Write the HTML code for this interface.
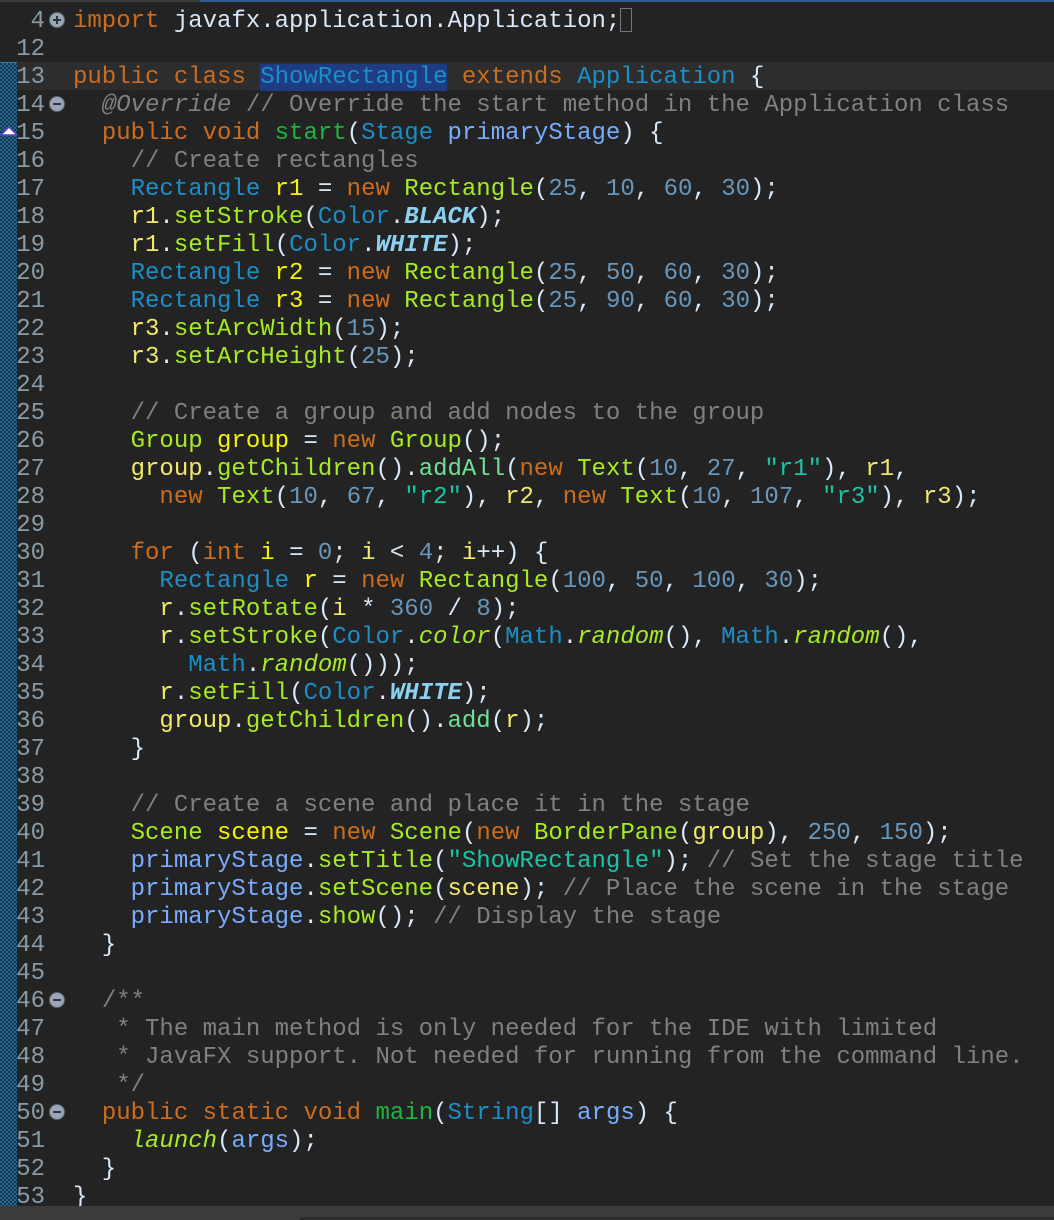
<!DOCTYPE html>
<html><head><meta charset="utf-8"><style>
html,body{margin:0;padding:0;background:#232323;width:1054px;height:1220px;overflow:hidden;position:relative}
.top{position:absolute;left:0;top:0;width:1054px;height:2px;background:#3a3a3c}
.top2{position:absolute;left:200px;top:0;width:854px;height:2px;background:#2f5c8e}
.gut{position:absolute;left:0;top:62px;width:17px;height:1144px;background-color:#14384f;background-image:conic-gradient(#2a6a92 25%,#14384f 0 50%,#2a6a92 0 75%,#14384f 0);background-size:4px 4px;border-top:1px solid #3a7aa8}
.hl{position:absolute;left:17px;top:62px;width:1037px;height:28px;background:#2d2d2d}
pre{margin:0;position:absolute;font-family:"Liberation Mono",monospace;font-size:24px;line-height:28px;white-space:pre}
.ln{left:0;top:8px;width:45px;text-align:right;color:#8a9ba8}
.code{left:73px;top:8px;color:#d9e8f7}
.k{color:#cc6c1d}.t{color:#1a8fc8}.m{color:#a7ec21}.lm{color:#6fe095}.n{color:#6897bb}.s{color:#17c6a3}.c{color:#808080}.p{color:#79abff}.v{color:#f2e96b}.vd{color:#f7f300}.sc{color:#8dd1f2;font-weight:bold;font-style:italic}.it{font-style:italic}.md{color:#1eb540}
.sel{background:#1f3b82}
.fold{position:absolute;left:49px;width:14px;height:14px;border-radius:50%;background:#9aa6b4;border:1px solid #5d6875}
.fold:after{content:"";position:absolute;left:3px;top:6px;width:8px;height:2px;background:#2b3440}
.plus:before{content:"";position:absolute;left:6px;top:3px;width:2px;height:8px;background:#2b3440}
.bot{position:absolute;left:0;top:1206px;width:1054px;height:14px;background:#3b3b3d}
.bot2{position:absolute;left:300px;top:1217px;width:754px;height:3px;background:#2a2a2a}
.box{display:inline-block;width:12px;height:24px;border:1px solid #777;vertical-align:-5px;box-sizing:border-box}
</style></head><body>
<div class="top"></div><div class="top2"></div>
<div class="hl"></div>
<div class="gut"></div>
<svg style="position:absolute;left:0;top:124px" width="18" height="14"><polygon points="1,11 9,3 17,11" fill="#fff" stroke="#5b3fc0" stroke-width="1.5"/></svg>
<div class="fold plus" style="top:12px"></div>
<div class="fold" style="top:96px"></div>
<div class="fold" style="top:992px"></div>
<div class="fold" style="top:1104px"></div>
<pre class="ln">4
12
13
14
15
16
17
18
19
20
21
22
23
24
25
26
27
28
29
30
31
32
33
34
35
36
37
38
39
40
41
42
43
44
45
46
47
48
49
50
51
52
53</pre>
<pre class="code"><span class="k">import</span> javafx.application.Application;<span class="box"></span>

<span class="k">public</span> <span class="k">class</span> <span class="t sel">ShowRectangle</span> <span class="k">extends</span> <span class="t">Application</span> {
  <span class="c it">@Override</span> <span class="c">// Override the start method in the Application class</span>
  <span class="k">public</span> <span class="k">void</span> <span class="md">start</span>(<span class="t">Stage</span> <span class="p">primaryStage</span>) {
    <span class="c">// Create rectangles</span>
    <span class="t">Rectangle</span> <span class="vd">r1</span> = <span class="k">new</span> <span class="m">Rectangle</span>(<span class="n">25</span>, <span class="n">10</span>, <span class="n">60</span>, <span class="n">30</span>);
    <span class="v">r1</span>.<span class="m">setStroke</span>(<span class="t">Color</span>.<span class="sc">BLACK</span>);
    <span class="v">r1</span>.<span class="m">setFill</span>(<span class="t">Color</span>.<span class="sc">WHITE</span>);
    <span class="t">Rectangle</span> <span class="vd">r2</span> = <span class="k">new</span> <span class="m">Rectangle</span>(<span class="n">25</span>, <span class="n">50</span>, <span class="n">60</span>, <span class="n">30</span>);
    <span class="t">Rectangle</span> <span class="vd">r3</span> = <span class="k">new</span> <span class="m">Rectangle</span>(<span class="n">25</span>, <span class="n">90</span>, <span class="n">60</span>, <span class="n">30</span>);
    <span class="v">r3</span>.<span class="m">setArcWidth</span>(<span class="n">15</span>);
    <span class="v">r3</span>.<span class="m">setArcHeight</span>(<span class="n">25</span>);

    <span class="c">// Create a group and add nodes to the group</span>
    <span class="m">Group</span> <span class="vd">group</span> = <span class="k">new</span> <span class="m">Group</span>();
    <span class="v">group</span>.<span class="m">getChildren</span>().<span class="lm">addAll</span>(<span class="k">new</span> <span class="m">Text</span>(<span class="n">10</span>, <span class="n">27</span>, <span class="s">"r1"</span>), <span class="v">r1</span>,
      <span class="k">new</span> <span class="m">Text</span>(<span class="n">10</span>, <span class="n">67</span>, <span class="s">"r2"</span>), <span class="v">r2</span>, <span class="k">new</span> <span class="m">Text</span>(<span class="n">10</span>, <span class="n">107</span>, <span class="s">"r3"</span>), <span class="v">r3</span>);

    <span class="k">for</span> (<span class="k">int</span> <span class="vd">i</span> = <span class="n">0</span>; <span class="v">i</span> &lt; <span class="n">4</span>; <span class="v">i</span>++) {
      <span class="t">Rectangle</span> <span class="vd">r</span> = <span class="k">new</span> <span class="m">Rectangle</span>(<span class="n">100</span>, <span class="n">50</span>, <span class="n">100</span>, <span class="n">30</span>);
      <span class="v">r</span>.<span class="m">setRotate</span>(<span class="v">i</span> * <span class="n">360</span> / <span class="n">8</span>);
      <span class="v">r</span>.<span class="m">setStroke</span>(<span class="t">Color</span>.<span class="m it">color</span>(<span class="t">Math</span>.<span class="m it">random</span>(), <span class="t">Math</span>.<span class="m it">random</span>(),
        <span class="t">Math</span>.<span class="m it">random</span>()));
      <span class="v">r</span>.<span class="m">setFill</span>(<span class="t">Color</span>.<span class="sc">WHITE</span>);
      <span class="v">group</span>.<span class="m">getChildren</span>().<span class="lm">add</span>(<span class="v">r</span>);
    }

    <span class="c">// Create a scene and place it in the stage</span>
    <span class="m">Scene</span> <span class="vd">scene</span> = <span class="k">new</span> <span class="m">Scene</span>(<span class="k">new</span> <span class="m">BorderPane</span>(<span class="v">group</span>), <span class="n">250</span>, <span class="n">150</span>);
    <span class="p">primaryStage</span>.<span class="m">setTitle</span>(<span class="s">"ShowRectangle"</span>); <span class="c">// Set the stage title</span>
    <span class="p">primaryStage</span>.<span class="m">setScene</span>(<span class="v">scene</span>); <span class="c">// Place the scene in the stage</span>
    <span class="p">primaryStage</span>.<span class="m">show</span>(); <span class="c">// Display the stage</span>
  }

  <span class="c">/**</span>
<span class="c">   * The main method is only needed for the IDE with limited</span>
<span class="c">   * JavaFX support. Not needed for running from the command line.</span>
<span class="c">   */</span>
  <span class="k">public</span> <span class="k">static</span> <span class="k">void</span> <span class="md">main</span>(<span class="t">String</span>[] <span class="p">args</span>) {
    <span class="m it">launch</span>(<span class="p">args</span>);
  }
}</pre>
<div class="bot"></div><div class="bot2"></div>
</body></html>
